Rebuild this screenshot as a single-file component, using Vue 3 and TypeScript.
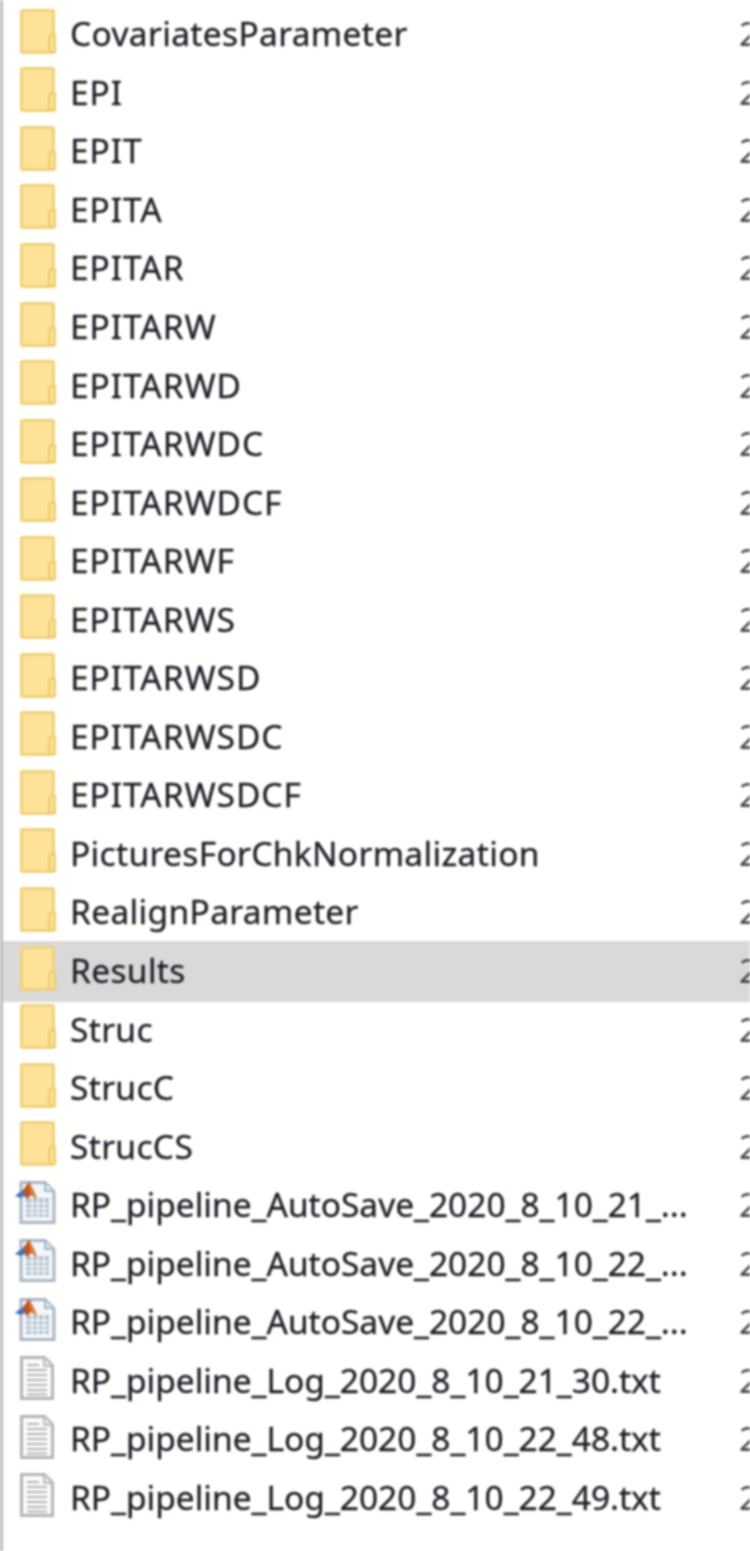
<script setup lang="ts">
type Kind = 'folder' | 'mat' | 'txt'
interface Item { name: string; kind: Kind; selected?: boolean; spacing?: 'caps' | 'mixed' }
const folders = ['CovariatesParameter','EPI','EPIT','EPITA','EPITAR','EPITARW','EPITARWD','EPITARWDC','EPITARWDCF','EPITARWF','EPITARWS','EPITARWSD','EPITARWSDC','EPITARWSDCF','PicturesForChkNormalization','RealignParameter','Results','Struc','StrucC','StrucCS']
const items: Item[] = [
  ...folders.map((name): Item => ({ name, kind: 'folder', selected: name === 'Results', spacing: name.startsWith('EPI') ? 'caps' : 'mixed' })),
  { name: 'RP_pipeline_AutoSave_2020_8_10_21_...', kind: 'mat' },
  { name: 'RP_pipeline_AutoSave_2020_8_10_22_...', kind: 'mat' },
  { name: 'RP_pipeline_AutoSave_2020_8_10_22_...', kind: 'mat' },
  { name: 'RP_pipeline_Log_2020_8_10_21_30.txt', kind: 'txt' },
  { name: 'RP_pipeline_Log_2020_8_10_22_48.txt', kind: 'txt' },
  { name: 'RP_pipeline_Log_2020_8_10_22_49.txt', kind: 'txt' },
]
</script>

<template>
  <div class="page">
    <div class="list">
      <div v-for="(item, i) in items" :key="i" class="row" :class="{ selected: item.selected }">
        <span class="icon">
          <svg v-if="item.kind === 'folder'" width="38" height="46" viewBox="0 0 38 46">
            <rect x="1.500" y="1.500" width="32" height="42" rx="1" fill="#fde298" stroke="#f0d27e" stroke-width="3" />
            <path d="M29 43V28l2-2h4v17z" fill="#fbe08e" stroke="#eccb70" stroke-width="2" />
          </svg>
          <svg v-else-if="item.kind === 'mat'" class="mat" width="42" height="44" viewBox="0 0 42 44">
            <path d="M6 1.500h24l9 9V41.500H6z" fill="#f4f7fa" stroke="#aab6c6" stroke-width="3" />
            <path d="M30 2v8h8" fill="#dfe7ef" stroke="#a6b7cb" stroke-width="2" />
            <rect x="11" y="17" width="23" height="19" fill="#b6c2d0" />
            <path d="M11 22.500h23M11 27.500h23M11 32h23M17 17v19M23 17v19M29 17v19" stroke="#f4f7fa" stroke-width="1.600" />
            <path d="M0 15l8-6 6-8 5 9 3 8-6-4-4 4-4-5z" fill="#c4531f" />
            <path d="M0 15l8-6 3 5-5 3z" fill="#3f76bb" />
            <path d="M14 2l4 8 3 7-5-4z" fill="#e08a3c" />
          </svg>
          <svg v-else width="34" height="44" viewBox="0 0 34 44">
            <path d="M1.500 1.500h23l8 8V42.500H1.500z" fill="#fbfbfb" stroke="#b4b4b4" stroke-width="3" />
            <path d="M24 2v8h8" fill="#e8e8e8" stroke="#bcbcbc" stroke-width="2" />
            <path d="M7 9h12M7 14h20M7 19h20M7 24h20M7 29h20M7 34h20M7 38.500h20" stroke="#b4b4b4" stroke-width="2" />
          </svg>
        </span>
        <span class="name" :class="item.spacing">{{ item.name }}</span>
        <span class="date">2</span>
      </div>
    </div>
  </div>
</template>

<style>
html, body { margin: 0; background: #fffffd; }
</style>

<style scoped>
.page {
  box-sizing: border-box;
  width: 750px;
  height: 1551px;
  overflow: hidden;
  padding-top: 4px;
  border-left: 3px solid #bcbcbc;
  background: #fffffd;
  font-family: "Noto Sans", "Open Sans", sans-serif;
  color: #1e1e28;
  filter: blur(0.9px);
}
.row {
  position: relative;
  display: flex;
  align-items: center;
  height: 58.56px;
  padding-left: 17px;
}
.row.selected::before {
  content: "";
  position: absolute;
  inset: 0 0 -3px 0;
  background: #d9d9d9;
}
.icon {
  position: relative;
  width: 50px;
  height: 46px;
  margin-top: -3px;
  flex: none;
  display: flex;
  align-items: center;
}
.mat {
  margin-left: -5px;
}
.name {
  position: relative;
  flex: 1;
  font-size: 33.500px;
  white-space: nowrap;
  -webkit-text-stroke: 0.3px currentColor;
}
.name.mixed {
  letter-spacing: 0.350px;
}
.name.caps {
  letter-spacing: 0.950px;
}
.date {
  position: relative;
  flex: none;
  width: 11px;
  font-size: 33.500px;
  color: #4a4a4a;
}
</style>
